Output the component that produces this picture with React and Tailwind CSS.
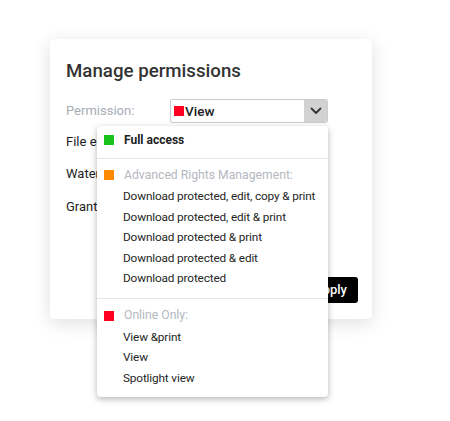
import React from 'react';

const Square = ({ color }) => (
  <span className={`inline-block w-[10px] h-[10px] shrink-0 ${color}`} />
);

const Header = ({ color, label, bold }) => (
  <div className="flex items-center h-full pl-[7px]">
    <Square color={color} />
    <span className={`ml-[10px] ${bold ? 'font-bold text-[#222] text-[12px]' : 'text-[#b4b8c0] text-[12.2px]'}`}>{label}</span>
  </div>
);

const Item = ({ label }) => (
  <div className="h-[20.5px] flex items-center pl-[26px] text-[11.8px] tracking-[-0.15px] text-[#262626]">{label}</div>
);

export default function App() {
  return (
    <div className="w-[450px] h-[421px] bg-white pt-[39px] pl-[50px]" style={{ fontFamily: 'Roboto, "Liberation Sans", sans-serif' }}>
      <div className="relative w-[322px] h-[280px] bg-white rounded-[4px] shadow-[0_4px_18px_rgba(0,0,0,0.13)] pl-4 pr-[14px] pt-[20px] pb-4 flex flex-col">
        <h1 className="text-[18.7px] font-medium text-[#333] leading-6">Manage permissions</h1>

        <div className="mt-[16px] flex items-center h-[24px]">
          <span className="w-[104px] text-[13px] text-[#a7adb7]">Permission:</span>
          <div className="flex h-[24px] w-[158px] border border-[#ccc] rounded-[2px]">
            <div className="flex-1 flex items-center pl-[3px] gap-[1px]">
              <Square color="bg-[#ff0022]" />
              <span className="text-[13.5px] font-medium text-[#222]">View</span>
            </div>
            <div className="w-[23px] bg-[#d2d2d2] flex items-center justify-center rounded-r-[2px]">
              <svg width="12" height="8" viewBox="0 0 12 8" fill="none" stroke="#333" strokeWidth="1.8" strokeLinecap="round" strokeLinejoin="round">
                <path d="M1.5 1.5 6 6l4.5-4.5" />
              </svg>
            </div>
          </div>
        </div>

        {/* labels mostly hidden under the open dropdown */}
        <div className="flex flex-col text-[13px] text-[#222] w-[31px] overflow-hidden whitespace-nowrap">
          <div className="h-[32px] flex items-center mt-[3px]">File expiration:</div>
          <div className="h-[32px] flex items-center">Watermark:</div>
          <div className="h-[33px] flex items-center">Grant access:</div>
        </div>

        <div className="mt-auto flex justify-end">
          <button className="h-[26px] px-[11px] bg-black text-white text-[13px] font-medium rounded-[3px]">Apply</button>
        </div>

        <div className="absolute left-[47px] top-[87px] w-[231px] bg-white rounded-[4px] shadow-[0_2px_6px_rgba(0,0,0,0.3)] pb-[8px]">
          <div className="h-[28px]">
            <Header color="bg-[#17c21a]" label="Full access" bold />
          </div>
          <div className="mt-[4px] border-t border-[#e6e6e6]" />
          <div className="h-[20px] mt-[6px] mb-[2px]">
            <Header color="bg-[#ff8a00]" label="Advanced Rights Management:" />
          </div>
          <Item label="Download protected, edit, copy & print" />
          <Item label="Download protected, edit & print" />
          <Item label="Download protected & print" />
          <Item label="Download protected & edit" />
          <Item label="Download protected" />
          <div className="mt-[8px] border-t border-[#e6e6e6]" />
          <div className="h-[20px] mt-[7px] mb-[2px]">
            <Header color="bg-[#ff0022]" label="Online Only:" />
          </div>
          <Item label="View &print" />
          <Item label="View" />
          <Item label="Spotlight view" />
        </div>
      </div>
    </div>
  );
}
